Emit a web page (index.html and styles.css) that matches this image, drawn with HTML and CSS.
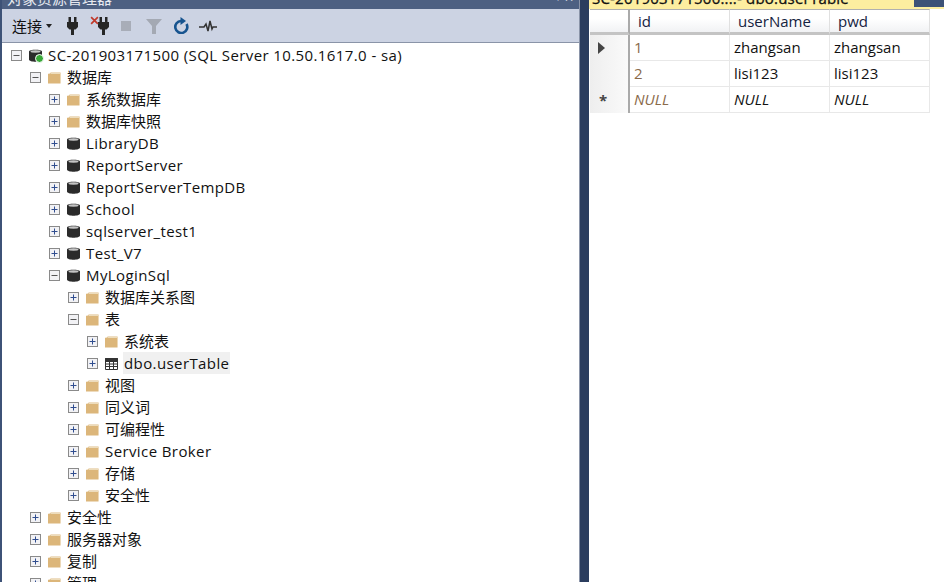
FILE: index.html
```html
<!DOCTYPE html>
<html lang="zh">
<head>
<meta charset="utf-8">
<title>SSMS</title>
<link rel="stylesheet" href="styles.css">
</head>
<body>
<svg class="defs" width="0" height="0">
  <symbol id="folder" viewBox="0 0 14 13"><path d="M0 2.500h1.500L3 1h10.500v12H0z" fill="#dcb67a"/><path d="M3.200 1.300H13V2.500H2.500z" fill="#f3e8d2"/></symbol>
  <symbol id="db" viewBox="0 0 13 13"><path d="M0 2.500C0 .2 13 .2 13 2.500v8c0 3-13 3-13 0z" fill="#2b2b2b"/><ellipse cx="6.500" cy="2.500" rx="5" ry="1.200" fill="#c4c4c4"/></symbol>
  <symbol id="plus" viewBox="0 0 11 11"><rect x=".5" y=".5" width="10" height="10" fill="#f2f2f5" stroke="#8a8a8a"/><path d="M2.500 5.500h6M5.500 2.500v6" stroke="#2f4d8f"/></symbol>
  <symbol id="minus" viewBox="0 0 11 11"><rect x=".5" y=".5" width="10" height="10" fill="#f2f2f5" stroke="#8a8a8a"/><path d="M2.500 5.500h6" stroke="#555"/></symbol>
  <symbol id="plug" viewBox="0 0 11 18"><path d="M1.500 0h2.500v5h3V0h2.500v5H11v5l-2.500 2.500H7V18H4v-5.500H2.500L0 10V5h1.500z" fill="#262626"/></symbol>
</svg>
<div class="app">
  <section class="explorer">
    <header class="titlebar"><span class="title-text">对象资源管理器</span><span class="title-btns">▾ ⨯</span></header>
    <div class="toolbar">
      <span class="connect">连接</span><span class="caret"></span>
      <svg class="tool plug1"><use href="#plug"/></svg>
      <span class="disc">
        <svg class="x" viewBox="0 0 8 8"><path d="M1 1l6 6M7 1L1 7" stroke="#c0392b" stroke-width="1.500"/></svg>
        <svg class="tool"><use href="#plug"/></svg>
      </span>
      <span class="stop"></span>
      <svg class="filter" viewBox="0 0 16 16"><path d="M0 1h16l-6 7v8H6V8z" fill="#a4a9b3"/></svg>
      <svg class="refresh" viewBox="0 0 16 17"><path d="M13.500 7A6 6 0 1 1 8 4" fill="none" stroke="#17548f" stroke-width="2.600"/><path d="M7.500 0v8l5.500-4z" fill="#17548f"/></svg>
      <svg class="pulse" viewBox="0 0 18 12"><path d="M0 7h5l2-3 2 7 2-10 2 8 1-2h4" fill="none" stroke="#333" stroke-width="1.500"/></svg>
    </div>
    <div class="tree">
      <div class="row lv0"><svg class="exp"><use href="#minus"/></svg><span class="srv"><svg class="ic"><use href="#db"/></svg><i class="run"></i></span><span class="lat">SC-201903171500 (SQL Server 10.50.1617.0 - sa)</span></div>
      <div class="row lv1"><svg class="exp"><use href="#minus"/></svg><svg class="ic"><use href="#folder"/></svg><span>数据库</span></div>
      <div class="row lv2"><svg class="exp"><use href="#plus"/></svg><svg class="ic"><use href="#folder"/></svg><span>系统数据库</span></div>
      <div class="row lv2"><svg class="exp"><use href="#plus"/></svg><svg class="ic"><use href="#folder"/></svg><span>数据库快照</span></div>
      <div class="row lv2"><svg class="exp"><use href="#plus"/></svg><svg class="ic"><use href="#db"/></svg><span class="lat">LibraryDB</span></div>
      <div class="row lv2"><svg class="exp"><use href="#plus"/></svg><svg class="ic"><use href="#db"/></svg><span class="lat">ReportServer</span></div>
      <div class="row lv2"><svg class="exp"><use href="#plus"/></svg><svg class="ic"><use href="#db"/></svg><span class="lat">ReportServerTempDB</span></div>
      <div class="row lv2"><svg class="exp"><use href="#plus"/></svg><svg class="ic"><use href="#db"/></svg><span class="lat">School</span></div>
      <div class="row lv2"><svg class="exp"><use href="#plus"/></svg><svg class="ic"><use href="#db"/></svg><span class="lat">sqlserver_test1</span></div>
      <div class="row lv2"><svg class="exp"><use href="#plus"/></svg><svg class="ic"><use href="#db"/></svg><span class="lat">Test_V7</span></div>
      <div class="row lv2"><svg class="exp"><use href="#minus"/></svg><svg class="ic"><use href="#db"/></svg><span class="lat">MyLoginSql</span></div>
      <div class="row lv3"><svg class="exp"><use href="#plus"/></svg><svg class="ic"><use href="#folder"/></svg><span>数据库关系图</span></div>
      <div class="row lv3"><svg class="exp"><use href="#minus"/></svg><svg class="ic"><use href="#folder"/></svg><span>表</span></div>
      <div class="row lv4"><svg class="exp"><use href="#plus"/></svg><svg class="ic"><use href="#folder"/></svg><span>系统表</span></div>
      <div class="row lv4"><svg class="exp"><use href="#plus"/></svg><svg class="ic" viewBox="0 0 13 13"><path d="M.5 1.500h12v11H.5z" fill="#fff" stroke="#333"/><path d="M.5 1.500h12v3H.5z" fill="#333" stroke="#333"/><path d="M.5 7h12M.5 9.500h12M4.500 4v8M8.500 4v8" fill="none" stroke="#333"/></svg><span class="lat sel">dbo.userTable</span></div>
      <div class="row lv3"><svg class="exp"><use href="#plus"/></svg><svg class="ic"><use href="#folder"/></svg><span>视图</span></div>
      <div class="row lv3"><svg class="exp"><use href="#plus"/></svg><svg class="ic"><use href="#folder"/></svg><span>同义词</span></div>
      <div class="row lv3"><svg class="exp"><use href="#plus"/></svg><svg class="ic"><use href="#folder"/></svg><span>可编程性</span></div>
      <div class="row lv3"><svg class="exp"><use href="#plus"/></svg><svg class="ic"><use href="#folder"/></svg><span class="lat">Service Broker</span></div>
      <div class="row lv3"><svg class="exp"><use href="#plus"/></svg><svg class="ic"><use href="#folder"/></svg><span>存储</span></div>
      <div class="row lv3"><svg class="exp"><use href="#plus"/></svg><svg class="ic"><use href="#folder"/></svg><span>安全性</span></div>
      <div class="row lv1"><svg class="exp"><use href="#plus"/></svg><svg class="ic"><use href="#folder"/></svg><span>安全性</span></div>
      <div class="row lv1"><svg class="exp"><use href="#plus"/></svg><svg class="ic"><use href="#folder"/></svg><span>服务器对象</span></div>
      <div class="row lv1"><svg class="exp"><use href="#plus"/></svg><svg class="ic"><use href="#folder"/></svg><span>复制</span></div>
      <div class="row lv1"><svg class="exp"><use href="#plus"/></svg><svg class="ic"><use href="#folder"/></svg><span>管理</span></div>
    </div>
  </section>
  <div class="splitter"></div>
  <section class="editor">
    <header class="tabbar"><span class="tab">SC-201903171500....- dbo.userTable</span><span class="tab-search"></span></header>
    <div class="grid">
      <div class="hc corner"></div><div class="hc">id</div><div class="hc">userName</div><div class="hc">pwd</div>
      <div class="rh"><i class="arrow"></i></div><div class="c num">1</div><div class="c">zhangsan</div><div class="c">zhangsan</div>
      <div class="rh"></div><div class="c num">2</div><div class="c">lisi123</div><div class="c">lisi123</div>
      <div class="rh star">*</div><div class="c null num">NULL</div><div class="c null">NULL</div><div class="c null">NULL</div>
    </div>
  </section>
</div>
</body>
</html>
```
FILE: styles.css
```css
* { box-sizing: border-box; }
html, body { margin: 0; height: 100%; overflow: hidden; }
body { font-family: "Open Sans", "Noto Sans CJK SC", sans-serif; font-size: 15px; color: #111; background: #fff; }
.defs { position: absolute; }
.app { display: flex; width: 944px; height: 582px; }
.explorer { width: 580px; height: 582px; background: #fff; border-left: 2px solid #3d5277; border-right: 1px solid #8a94a8; overflow: hidden; }
.titlebar { height: 9px; background: #4d6082; color: #e6e9f0; display: flex; justify-content: space-between; overflow: hidden; padding: 0 5px; font-size: 15px; line-height: 0; }
.title-text { margin-top: -2px; }
.title-btns { font-size: 12px; margin-top: -3px; }
.toolbar { height: 34px; background: #ccd3e3; border-bottom: 1px solid #8a94a8; display: flex; align-items: center; padding-left: 10px; }
.connect { font-size: 15px; }
.caret { border: 3.500px solid transparent; border-top: 4px solid #222; border-bottom: 0; margin-left: 4px; }
.tool { width: 11px; height: 18px; }
.plug1 { margin-left: 15px; }
.disc { display: flex; align-items: flex-end; margin-left: 20px; position: relative; }
.x { width: 9px; height: 9px; position: absolute; left: -8px; top: -1px; }
.stop { width: 10px; height: 10px; background: #a8adb8; margin-left: 12px; }
.filter { width: 16px; height: 16px; margin-left: 15px; }
.refresh { width: 16px; height: 17px; margin-left: 11px; }
.pulse { width: 18px; height: 12px; margin-left: 10px; }
.tree { padding-top: 1px; }
.row { height: 22px; display: flex; align-items: center; white-space: nowrap; }
.row > span { padding-bottom: 2px; }
.row > .srv { padding-bottom: 0; }
.row > .lat { padding-bottom: 0; letter-spacing: .4px; }
.exp { width: 11px; height: 11px; flex: none; margin-right: 7px; }
.ic { width: 13px; height: 13px; flex: none; margin-right: 6px; }
.lv0 { padding-left: 9px; }
.lv1 { padding-left: 28px; }
.lv2 { padding-left: 47px; }
.lv3 { padding-left: 66px; }
.lv4 { padding-left: 85px; }
.srv { position: relative; display: flex; }
.run { position: absolute; left: 6px; top: 5px; width: 9px; height: 9px; border-radius: 50%; background: #38a838; border: 1px solid #fff; }
.sel { background: #f0f0f0; padding: 0 1px; margin-left: -1px; align-self: stretch; line-height: 22px; }
.splitter { width: 9px; height: 582px; background: #2b3d5e; }
.editor { flex: 1; background: #fff; min-width: 0; }
.tabbar { height: 9px; display: flex; background: #fdeea0; overflow: hidden; }
.tab { flex: 1; font-size: 15px; line-height: 0; padding-left: 3px; margin-top: -2px; letter-spacing: .2px; -webkit-text-stroke: .3px #111; }
.tab-search { width: 30px; height: 7px; background: #3d5277; }
.grid { display: grid; grid-template-columns: 40px 100px 100px 100px; grid-template-rows: 26px 26px 26px 26px; width: 340px; margin-left: 1px; }
.hc { background: linear-gradient(#fff 40%, #f1f2f4); border-top: 1px solid #b0b0b0; border-right: 1px solid #e0e0e0; border-bottom: 3px solid #c4c4c4; padding-left: 8px; line-height: 23px; color: #15233f; }
.corner { border-right: 2px solid #aaa; }
.rh { background: linear-gradient(90deg, #eee, #fafafa); border-right: 2px solid #aaa; display: flex; align-items: center; justify-content: center; }
.arrow { border: 6px solid transparent; border-left: 7px solid #444; border-right: 0; margin-right: 16px; }
.star { font-weight: 700; color: #444; padding-right: 12px; }
.c { border-right: 1px solid #e8e8e8; border-bottom: 1px solid #e8e8e8; padding-left: 4px; line-height: 24px; }
.num { color: #8a6a4a; }
.null { font-style: italic; }
```
